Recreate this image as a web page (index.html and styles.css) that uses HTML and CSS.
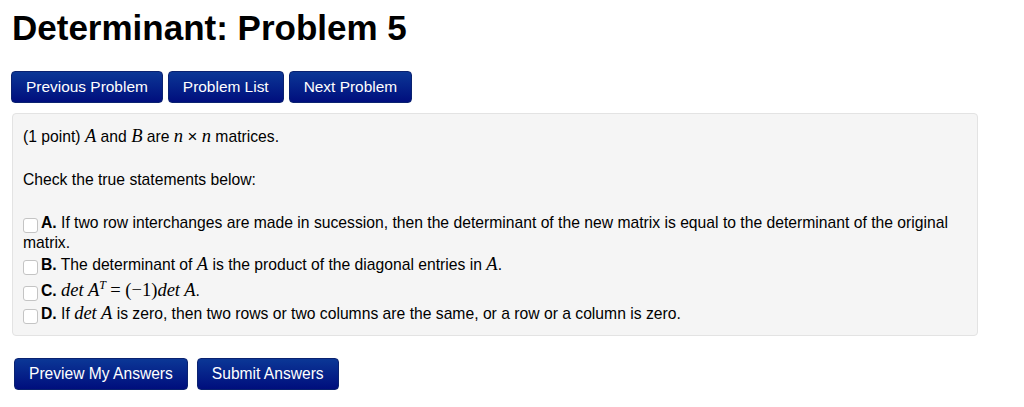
FILE: index.html
```html
<!DOCTYPE html>
<html>
<head>
<link rel="stylesheet" href="styles.css">
</head>
<body>

<h1 class="title">Determinant: Problem 5</h1>

<div class="navDIV">
<button class="navButton" type="button">Previous Problem</button>
<button class="navButton" type="button">Problem List</button>
<button class="navButton" type="button">Next Problem</button>
</div>

<div class="problemDIV">
<p class="intro">(1 point) <span class="m">A</span> and <span class="m">B</span> are <span class="m">n</span> <span class="times">&times;</span> <span class="m">n</span> matrices.</p>
<p class="intro">Check the true statements below:</p>

<div class="answers">
<label class="answer lineA"><input type="checkbox" class="box"><b>A.</b> If two row interchanges are made in sucession, then the determinant of the new matrix is equal to the determinant of the original matrix.</label>
<label class="answer lineB"><input type="checkbox" class="box"><b>B.</b> The determinant of <span class="m">A</span> is the product of the diagonal entries in <span class="m">A</span>.</label>
<label class="answer lineC"><input type="checkbox" class="box"><b>C.</b> <span class="m">det A<sup class="sup">T</sup></span> <span class="mr">= (&minus;1)</span><span class="m">det A</span>.</label>
<label class="answer lineD"><input type="checkbox" class="box"><b>D.</b> If <span class="m">det A</span> is zero, then two rows or two columns are the same, or a row or a column is zero.</label>
</div>
</div>

<div class="submitDIV">
<button class="navButton" type="button">Preview My Answers</button>
<button class="navButton" type="button">Submit Answers</button>
</div>

</body>
</html>
```

FILE: styles.css
```css
body {
  margin: 0;
  padding: 0 12px;
  font-family: "Liberation Sans", Arial, sans-serif;
  color: #000;
  background: white;
}

.title {
  font-size: 35px;
  font-weight: bold;
  line-height: 40px;
  margin: 8px 0 0 0;
}

.navDIV {
  display: flex;
  gap: 5px;
  margin-top: 23px;
  margin-left: -1px;
}

.navButton {
  height: 32px;
  padding: 0 14px;
  font-family: "Liberation Sans", Arial, sans-serif;
  font-size: 15.45px;
  color: white;
  background: linear-gradient(#0b3796, #000e7d);
  border: 1px solid #0a2270;
  border-radius: 4px;
  cursor: pointer;
}

.submitDIV .navButton {
  font-size: 15.6px;
}

.problemDIV {
  margin-top: 10px;
  width: 944px;
  padding: 12px 10px 11px 10px;
  background: #f5f5f5;
  border: 1px solid #e3e3e3;
  border-radius: 4px;
  font-size: 15.7px;
}

.intro {
  margin: 0 0 23px 0;
  line-height: 20px;
}

.intro + .intro {
  margin-bottom: 26px;
}

.m {
  font-family: "Liberation Serif", "Times New Roman", serif;
  font-style: italic;
  font-size: 18.5px;
}

.mr {
  font-family: "Liberation Serif", "Times New Roman", serif;
  font-size: 18.5px;
}

.times {
  font-size: 17px;
}

.sup {
  font-size: 12px;
  line-height: 0;
}

.answers {
  margin-top: -3px;
}

.answer {
  display: block;
  line-height: 20px;
}

.lineB {
  margin-top: 1px;
}

.lineC {
  margin-top: 5px;
}

.lineD {
  margin-top: 2px;
}

.box {
  appearance: none;
  width: 15px;
  height: 15px;
  margin: 0 3px 0 0;
  vertical-align: -5px;
  background: white;
  border: 1px solid #c4c4c4;
  border-radius: 3px;
}

.submitDIV {
  display: flex;
  gap: 9px;
  margin-top: 22px;
  margin-left: 2px;
}
```
